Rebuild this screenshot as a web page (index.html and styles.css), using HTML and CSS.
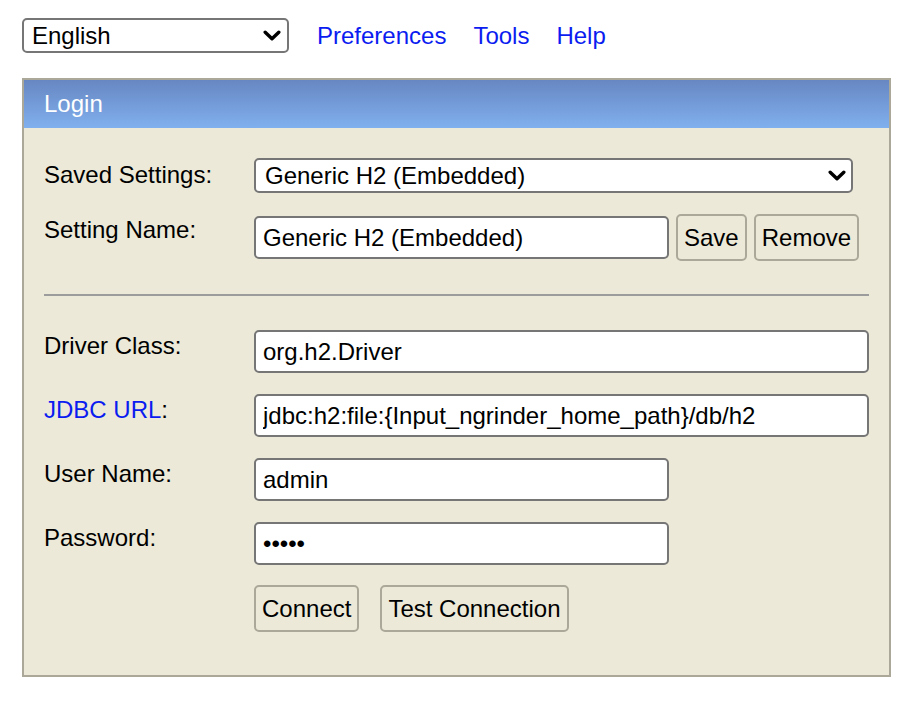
FILE: index.html
```html
<!DOCTYPE html>
<html lang="en">
<head>
<meta charset="utf-8">
<title>H2 Console Login</title>
<link rel="stylesheet" href="styles.css">
</head>
<body>
<div class="page">
  <div class="topbar">
    <span class="select-wrap lang">
      <select class="select"><option>English</option></select>
      <svg class="chev" viewBox="0 0 18 12" width="18" height="12"><path d="M2.2 2.2 L9 8.8 L15.8 2.2" fill="none" stroke="#000" stroke-width="3.4" stroke-linecap="round" stroke-linejoin="round"/></svg>
    </span>
    <a class="link" href="#">Preferences</a>
    <a class="link" href="#">Tools</a>
    <a class="link" href="#">Help</a>
  </div>

  <div class="panel">
    <div class="panel-head">Login</div>
    <div class="panel-body">
      <div class="row r-saved">
        <label class="lbl">Saved Settings:</label>
        <span class="select-wrap saved">
          <select class="select"><option>Generic H2 (Embedded)</option></select>
          <svg class="chev" viewBox="0 0 18 12" width="18" height="12"><path d="M2.2 2.2 L9 8.8 L15.8 2.2" fill="none" stroke="#000" stroke-width="3.4" stroke-linecap="round" stroke-linejoin="round"/></svg>
        </span>
      </div>
      <div class="row r-name">
        <label class="lbl">Setting Name:</label>
        <div class="ctrl-group">
          <input class="inp short" type="text" value="Generic H2 (Embedded)">
          <button class="btn">Save</button>
          <button class="btn">Remove</button>
        </div>
      </div>
      <hr class="sep">
      <div class="row r-field">
        <label class="lbl">Driver Class:</label>
        <input class="inp long" type="text" value="org.h2.Driver">
      </div>
      <div class="row r-field">
        <label class="lbl"><a class="link" href="#">JDBC URL</a>:</label>
        <input class="inp long" type="text" value="jdbc:h2:file:{Input_ngrinder_home_path}/db/h2">
      </div>
      <div class="row r-field">
        <label class="lbl">User Name:</label>
        <input class="inp short" type="text" value="admin">
      </div>
      <div class="row r-field">
        <label class="lbl">Password:</label>
        <input class="inp short" type="password" value="admin">
      </div>
      <div class="row r-actions">
        <span class="lbl"></span>
        <div class="actions">
          <button class="btn">Connect</button>
          <button class="btn">Test Connection</button>
        </div>
      </div>
    </div>
  </div>
</div>
</body>
</html>
```

FILE: styles.css
```css
* { box-sizing: border-box; }

html, body {
  margin: 0;
  padding: 0;
  background: #ffffff;
}

body {
  font-family: "Liberation Sans", Arial, sans-serif;
  font-size: 24px;
  color: #000;
}

.page {
  padding: 18px 0 0 22px;
}

.topbar {
  display: flex;
  align-items: center;
  height: 35px;
  gap: 27px;
}

.topbar .link:first-of-type { margin-left: 1px; }

.link {
  color: #0b1cf0;
  text-decoration: none;
}

.select-wrap {
  position: relative;
  display: inline-block;
}

.select {
  -webkit-appearance: none;
  appearance: none;
  display: block;
  height: 35px;
  border: 2px solid #767676;
  border-radius: 5px;
  background: #fff;
  font-family: "Liberation Sans", Arial, sans-serif;
  font-size: 24px;
  color: #000;
  padding: 0 30px 0 8px;
  margin: 0;
}

.lang .select { width: 267px; }
.saved .select { width: 599px; padding-left: 9px; }

.chev {
  position: absolute;
  top: 12px;
  pointer-events: none;
}

.lang .chev { right: 8px; }
.saved .chev { right: 7px; }

.panel {
  margin-top: 25px;
  width: 869px;
  border: 2px solid #aca899;
  background: #ece9d8;
}

.panel-head {
  height: 48px;
  display: flex;
  align-items: center;
  padding: 0 0 1px 20px;
  color: #fff;
  background: linear-gradient(#6787c2, #80b0ee);
}

.panel-body {
  display: flex;
  flex-direction: column;
  padding: 30px 20px 43px 20px;
}

.row {
  display: flex;
  align-items: flex-start;
}

.lbl {
  flex: 0 0 210px;
  padding-top: 2px;
}

.r-saved .lbl { padding-top: 3px; }

.r-name { margin-top: 21px; }
.r-field { margin-top: 21px; }
.r-actions { margin-top: 20px; }

.sep {
  margin: 33px 0 0 0;
  border: 0;
  border-top: 2px solid #9c9c9c;
  height: 0;
}

.sep + .row { margin-top: 34px; }

.ctrl-group {
  display: flex;
  align-items: center;
  gap: 7px;
}

.inp {
  height: 43px;
  border: 2px solid #767676;
  border-radius: 5px;
  background: #fff;
  font-family: "Liberation Sans", Arial, sans-serif;
  font-size: 24px;
  color: #000;
  padding: 0 7px;
  margin: 0;
}

.inp.short { width: 415px; }
.inp.long { width: 615px; }

.btn {
  height: 47px;
  border: 2px solid #aca899;
  border-radius: 5px;
  background: #ece9d8;
  font-family: "Liberation Sans", Arial, sans-serif;
  font-size: 24px;
  color: #000;
  padding: 0 6px;
  margin: 0;
}

.actions {
  display: flex;
  gap: 21px;
}
```
